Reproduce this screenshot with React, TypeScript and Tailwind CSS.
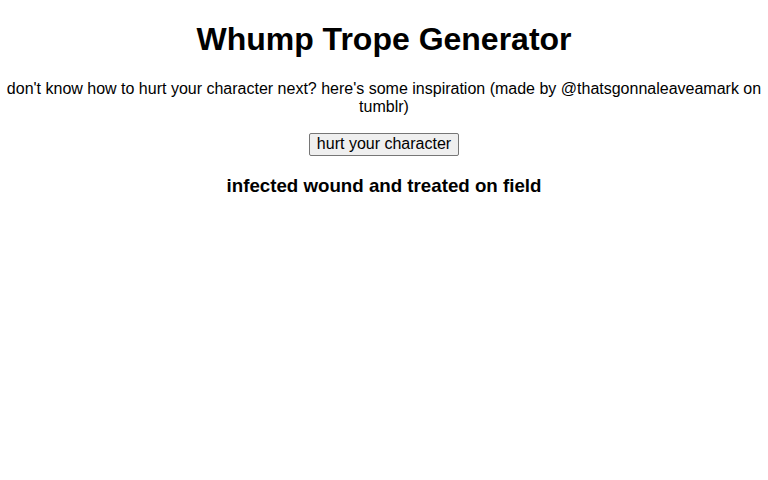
export default function App() {
  return (
    <div
      className="pt-[21.44px] text-center text-black bg-white min-h-[480px]"
      style={{ fontFamily: '"Liberation Sans", Arial, sans-serif' }}
    >
      <h1 className="text-[32px] font-bold leading-[36.8px]">Whump Trope Generator</h1>
      <p className="mt-[21.44px] text-[16px] leading-[18.4px]">
        don't know how to hurt your character next? here's some inspiration (made by @thatsgonnaleaveamark on tumblr)
      </p>
      <div className="mt-4">
        <button className="text-[16px] leading-[18.4px] px-[7px] py-px bg-[#efefef] border border-[#767676] rounded-[2px] text-black">
          hurt your character
        </button>
      </div>
      <h3 className="mt-[18.72px] text-[18.72px] font-bold leading-[21.5px]">infected wound and treated on field</h3>
    </div>
  );
}
